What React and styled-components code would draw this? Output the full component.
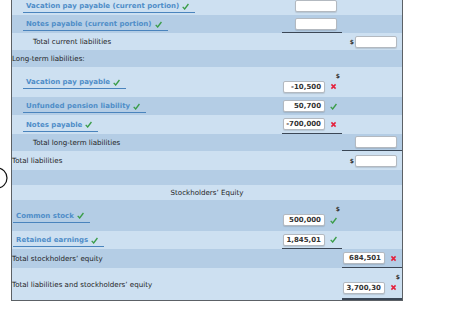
import React from "react";
import styled, { createGlobalStyle } from "styled-components";

const GlobalStyle = createGlobalStyle`
  body {
    margin: 0;
    background: #ffffff;
    font-family: "DejaVu Sans", Verdana, sans-serif;
    font-size: 7.1px;
    color: #1e1e1e;
  }
`;

const Page = styled.div`
  position: relative;
  width: 474px;
  height: 310px;
  overflow: hidden;
`;

const Table = styled.div`
  margin: -3px 0 0 11px;
  width: 390px;
  border-left: 1px solid #5c6166;
  border-right: 1px solid #5c6166;
  border-bottom: 1px solid #5c6166;
`;

const Row = styled.div`
  display: grid;
  grid-template-columns: 270px 60px 60px;
  height: ${(p) => p.$h}px;
  background: ${(p) => (p.$dark ? "#b4cde5" : "#cde0f1")};
`;

const LabelCell = styled.div`
  display: flex;
  align-items: center;
  padding-left: ${(p) => p.$indent || 0}px;
`;

const Heading = styled.div`
  grid-column: 1 / -1;
  display: flex;
  align-items: center;
  justify-content: center;
`;

const PickLabel = styled.span`
  display: inline-flex;
  align-items: center;
  gap: 3px;
  padding: 0 6px 2px 3px;
  margin-top: 3px;
  color: #4f8dc8;
  font-size: 7px;
  font-weight: bold;
  border-bottom: 1px solid #4a84bd;
`;

const AmountCell = styled.div`
  display: flex;
  flex-direction: column;
  justify-content: center;
  align-items: flex-end;
  padding-right: 5px;
  box-sizing: border-box;
  border-bottom: ${(p) => (p.$rule ? `${p.$rule}px solid #3b4756` : "none")};
`;

const DollarTop = styled.span`
  font-size: 6px;
  font-weight: bold;
  color: #333;
  margin: 0 -3px 2px 0;
`;

const FieldLine = styled.div`
  display: flex;
  align-items: center;
`;

const Dollar = styled.span`
  font-size: 6px;
  font-weight: bold;
  color: #333;
  margin-right: 1px;
`;

const Field = styled.span`
  display: flex;
  align-items: center;
  justify-content: flex-end;
  width: 42px;
  height: 12px;
  box-sizing: border-box;
  padding-right: 3px;
  background: #ffffff;
  border: 1px solid #b3b9c0;
  border-radius: 2px;
  box-shadow: 0 1px 1px rgba(0, 0, 0, 0.12);
  font-size: 7px;
  font-weight: bold;
  color: #333;
`;

const Mark = styled.span`
  display: flex;
  width: 7px;
  margin-left: 5px;
`;

const Circle = styled.svg`
  position: absolute;
  left: 0;
  top: 166px;
`;

const Check = () => (
  <svg width="7" height="7" viewBox="0 0 10 10">
    <path d="M1 5.6 L3.8 8.6 L9.2 1.4" fill="none" stroke="#3a9d48" strokeWidth="1.9" />
  </svg>
);

const Cross = () => (
  <svg width="7" height="7" viewBox="0 0 10 10">
    <path d="M2 2 L8 8 M8 2 L2 8" fill="none" stroke="#e4203c" strokeWidth="2.2" />
  </svg>
);

const Amount = ({ value, mark, dollar, top, rule }) => (
  <AmountCell $rule={rule}>
    {top && <DollarTop>$</DollarTop>}
    {value !== undefined && (
      <FieldLine>
        {dollar && <Dollar>$</Dollar>}
        <Field>{value}</Field>
        {mark && <Mark>{mark === "ok" ? <Check /> : <Cross />}</Mark>}
      </FieldLine>
    )}
  </AmountCell>
);

const Pick = ({ children }) => (
  <PickLabel>
    {children}
    <Check />
  </PickLabel>
);

export default function App() {
  return (
    <Page>
      <GlobalStyle />
      <Circle width="12" height="26">
        <circle cx="-3" cy="12" r="10" fill="none" stroke="#111" strokeWidth="1.2" />
      </Circle>
      <Table>
        <Row $h={18}>
          <LabelCell $indent={11}><Pick>Vacation pay payable (current portion)</Pick></LabelCell>
          <Amount value="" />
          <Amount />
        </Row>
        <Row $h={18} $dark>
          <LabelCell $indent={11}><Pick>Notes payable (current portion)</Pick></LabelCell>
          <Amount value="" rule={1} />
          <Amount />
        </Row>
        <Row $h={17}>
          <LabelCell $indent={21}>Total current liabilities</LabelCell>
          <Amount />
          <Amount value="" dollar />
        </Row>
        <Row $h={17} $dark>
          <LabelCell>Long-term liabilities:</LabelCell>
          <Amount />
          <Amount />
        </Row>
        <Row $h={30}>
          <LabelCell $indent={11}><Pick>Vacation pay payable</Pick></LabelCell>
          <Amount value="-10,500" mark="bad" top />
          <Amount />
        </Row>
        <Row $h={18} $dark>
          <LabelCell $indent={11}><Pick>Unfunded pension liability</Pick></LabelCell>
          <Amount value="50,700" mark="ok" />
          <Amount />
        </Row>
        <Row $h={19}>
          <LabelCell $indent={11}><Pick>Notes payable</Pick></LabelCell>
          <Amount value="-700,000" mark="bad" rule={1} />
          <Amount />
        </Row>
        <Row $h={17} $dark>
          <LabelCell $indent={21}>Total long-term liabilities</LabelCell>
          <Amount />
          <Amount value="" rule={1} />
        </Row>
        <Row $h={19}>
          <LabelCell>Total liabilities</LabelCell>
          <Amount />
          <Amount value="" dollar />
        </Row>
        <Row $h={15} $dark />
        <Row $h={15}>
          <Heading>Stockholders’ Equity</Heading>
        </Row>
        <Row $h={31} $dark>
          <LabelCell $indent={1}><Pick>Common stock</Pick></LabelCell>
          <Amount value="500,000" mark="ok" top />
          <Amount />
        </Row>
        <Row $h={18}>
          <LabelCell $indent={1}><Pick>Retained earnings</Pick></LabelCell>
          <Amount value="1,845,01" mark="ok" rule={1} />
          <Amount />
        </Row>
        <Row $h={19} $dark>
          <LabelCell>Total stockholders’ equity</LabelCell>
          <Amount />
          <Amount value="684,501" mark="bad" rule={1} />
        </Row>
        <Row $h={32}>
          <LabelCell>Total liabilities and stockholders’ equity</LabelCell>
          <Amount />
          <Amount value="3,700,30" mark="bad" top rule={2} />
        </Row>
      </Table>
    </Page>
  );
}
